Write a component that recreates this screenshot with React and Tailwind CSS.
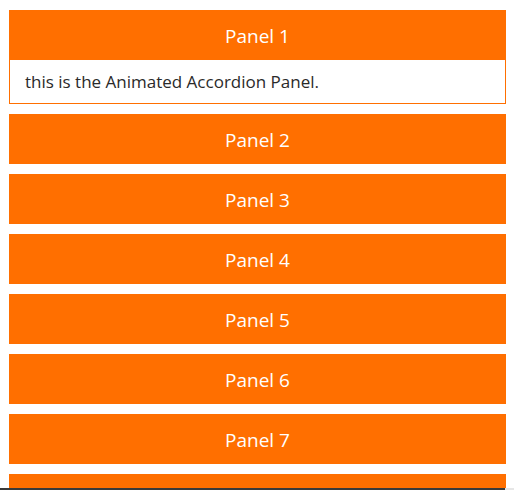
import React, { useState } from "react";

const panels = [1, 2, 3, 4, 5, 6, 7, 8];

const Panel = ({ n, open, onToggle }) => (
  <div className="flex flex-col">
    <button
      onClick={onToggle}
      className="h-[50px] w-full bg-[#ff6f00] text-white text-[19px] leading-none pt-[3px] flex items-center justify-center"
    >
      Panel {n}
    </button>
    {open && (
      <div className="h-[44px] border border-t-0 border-[#ff6f00] bg-white px-[15px] flex items-center text-[17px] text-[#2a2a2a]">
        this is the Animated Accordion Panel.
      </div>
    )}
  </div>
);

export default function App() {
  const [openId, setOpenId] = useState(1);

  return (
    <div
      className="h-screen overflow-hidden bg-white pt-[10px] pl-[9px] pr-[8px] flex flex-col gap-[10px]"
      style={{ fontFamily: '"Open Sans", "Noto Sans", sans-serif' }}
    >
      {panels.map((n) => (
        <Panel
          key={n}
          n={n}
          open={openId === n}
          onToggle={() => setOpenId(openId === n ? null : n)}
        />
      ))}
      {/* scrollbar edge at the bottom */}
      <div className="fixed bottom-0 left-0 right-0 h-[2px] flex">
        <div className="w-[505px] bg-[#3a3a3a]" />
        <div className="flex-1 bg-[#e6e6e6]" />
      </div>
    </div>
  );
}
